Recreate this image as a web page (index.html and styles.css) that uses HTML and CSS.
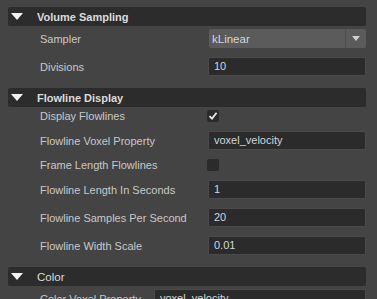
FILE: index.html
```html
<!DOCTYPE html>
<html>
<head>
<meta charset="utf-8">
<link rel="stylesheet" href="styles.css">
</head>
<body>
<div class="panel">
  <div class="section">
    <div class="header"><span class="tri"></span><span class="title">Volume Sampling</span></div>
    <div class="body">
      <div class="row">
        <span class="label">Sampler</span>
        <div class="dropdown"><span class="dd-text">kLinear</span><span class="dd-arrow"><span class="dd-tri"></span></span></div>
      </div>
      <div class="row">
        <span class="label">Divisions</span>
        <div class="field">10</div>
      </div>
    </div>
  </div>
  <div class="section">
    <div class="header"><span class="tri"></span><span class="title">Flowline Display</span></div>
    <div class="body">
      <div class="row row-check">
        <span class="label">Display Flowlines</span>
        <div class="check">
          <svg width="10" height="10" viewBox="0 0 10 10"><path d="M1.5 5.2 L4 7.6 L8.6 1.8" fill="none" stroke="#e8e8e8" stroke-width="1.8"/></svg>
        </div>
      </div>
      <div class="row">
        <span class="label">Flowline Voxel Property</span>
        <div class="field">voxel_velocity</div>
      </div>
      <div class="row row-check">
        <span class="label">Frame Length Flowlines</span>
        <div class="check"></div>
      </div>
      <div class="row">
        <span class="label">Flowline Length In Seconds</span>
        <div class="field">1</div>
      </div>
      <div class="row">
        <span class="label">Flowline Samples Per Second</span>
        <div class="field">20</div>
      </div>
      <div class="row">
        <span class="label">Flowline Width Scale</span>
        <div class="field">0.01</div>
      </div>
    </div>
  </div>
  <div class="section">
    <div class="header"><span class="tri"></span><span class="title title-plain">Color</span></div>
    <div class="body">
      <div class="row row-narrow">
        <span class="label">Color Voxel Property</span>
        <div class="field">voxel_velocity</div>
      </div>
    </div>
  </div>
</div>
</body>
</html>
```
FILE: styles.css
```css
html, body {
  margin: 0;
  padding: 0;
  background: #444444;
  overflow: hidden;
}
body {
  font-family: "Liberation Sans", Arial, sans-serif;
  font-size: 11px;
  color: #c8c8c8;
}
.panel {
  padding: 7px 11px 0 8px;
  width: 358px;
}
.section {
  display: flex;
  flex-direction: column;
}
.header {
  height: 19px;
  background: #2c2c2c;
  border-radius: 2px;
  display: flex;
  align-items: center;
}
.tri {
  width: 0;
  height: 0;
  margin-left: 3px;
  border-left: 6.5px solid transparent;
  border-right: 6.5px solid transparent;
  border-top: 7px solid #f2f2f2;
}
.title {
  margin-left: 14px;
  font-weight: bold;
  color: #dcdcdc;
}
.title-plain {
  font-weight: normal;
  font-size: 11.5px;
}
.body {
  display: flex;
  flex-direction: column;
  gap: 9px;
  padding: 3px 0 12px 0;
}
.row {
  display: grid;
  grid-template-columns: 200px 1fr;
  align-items: center;
  height: 19px;
}
.row-check {
  height: 12px;
}
.row-narrow {
  grid-template-columns: 146px 1fr;
}
.label {
  padding-left: 32px;
  white-space: nowrap;
}
.field {
  height: 19px;
  box-sizing: border-box;
  background: #2b2b2b;
  border: 1px solid #4a4a4a;
  border-radius: 2px;
  padding: 0 5px;
  line-height: 17px;
  color: #d2d6da;
}
.dropdown {
  height: 19px;
  margin-left: 1px;
  background: #5b5b5b;
  border-radius: 2px;
  display: flex;
  align-items: center;
  font-size: 11.5px;
}
.dd-text {
  flex: 1;
  padding-left: 3px;
  color: #d6d6d6;
}
.dd-arrow {
  width: 20px;
  height: 19px;
  border-left: 1px solid #4c4c4c;
  display: flex;
  align-items: center;
  justify-content: center;
}
.dd-tri {
  width: 0;
  height: 0;
  border-left: 4.5px solid transparent;
  border-right: 4.5px solid transparent;
  border-top: 5px solid #cfcfcf;
}
.check {
  width: 12px;
  height: 12px;
  margin-left: -1px;
  background: #2b2b2b;
  border-radius: 2px;
  display: flex;
  align-items: center;
  justify-content: center;
}
```
